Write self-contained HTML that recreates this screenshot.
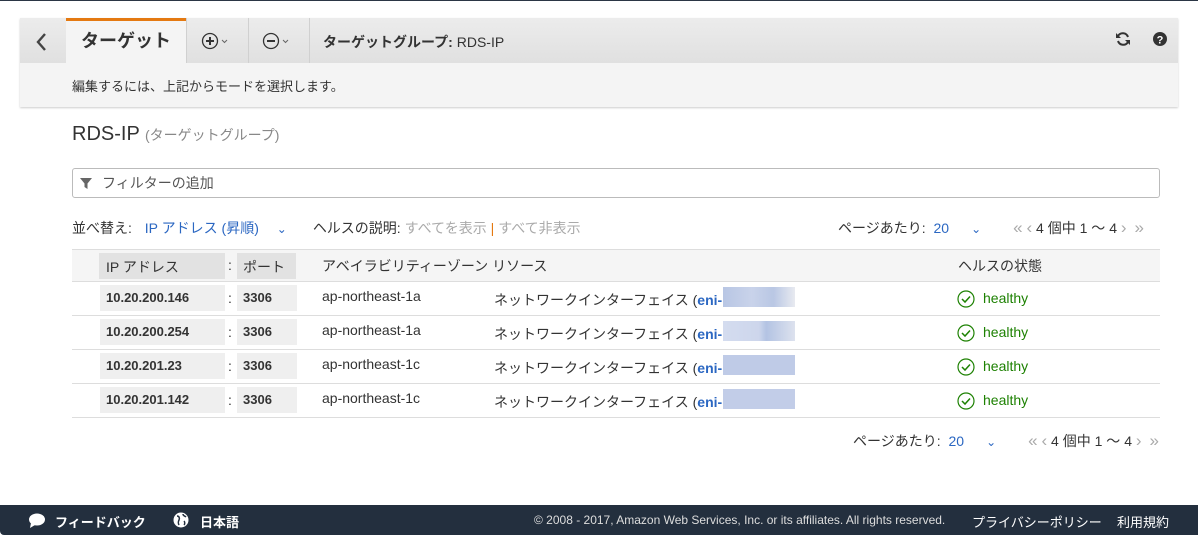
<!DOCTYPE html>
<html><head><meta charset="utf-8"><style>
*{box-sizing:border-box;margin:0;padding:0}
body{width:1198px;height:535px;overflow:hidden;background:#fff;font-family:"Liberation Sans","Noto Sans CJK JP",sans-serif;color:#333;font-size:14px;position:relative}
.abs{position:absolute}
.topline{left:0;top:0;width:1198px;height:1px;background:#2b3645}
.panel{left:20px;top:18px;width:1158px;height:89px;background:#f4f4f4;box-shadow:0 1px 2px rgba(0,0,0,.2)}
.bar{left:20px;top:18px;width:1158px;height:45px;background:linear-gradient(#ececec,#e0e0e0)}
.sep{top:18px;width:1px;height:45px;background:#d0d0d0}
.tab{left:66px;top:18px;width:120px;height:45px;background:#f4f4f4;border-top:3px solid #e47911;font-weight:bold;font-size:18px;text-align:center;line-height:40px;color:#333}
.t{white-space:nowrap}
.blue{color:#2b67c2}
.gray{color:#aaa}
.arr{font-size:17px}
.hdr{left:72px;top:249px;width:1088px;height:33px;background:#f5f5f5;border-top:1px solid #ddd;border-bottom:1px solid #ddd}
.cell{background:#efefef}
.rowline{left:72px;width:1088px;height:1px;background:#ddd}
.ok{width:18px;height:18px}
.foot{left:0;top:505px;width:1198px;height:30px;background:#232f3e;color:#fff;font-size:13px;border-bottom-left-radius:4px}
</style></head><body>
<div class="abs topline"></div>
<div class="abs panel"></div>
<div class="abs bar"></div>
<div class="abs t" style="left:35px;top:31px;">
<svg width="14" height="22" viewBox="0 0 14 22"><path d="M10 3 L3 11 L10 19" stroke="#444" stroke-width="2.4" fill="none"/></svg></div>
<div class="abs tab">ターゲット</div>
<div class="abs sep" style="left:186px"></div>
<div class="abs sep" style="left:248px"></div>
<div class="abs sep" style="left:309px"></div>
<svg class="abs" style="left:200px;top:31px" width="34" height="20" viewBox="0 0 34 20"><circle cx="10" cy="10" r="7.5" stroke="#333" stroke-width="1.3" fill="none"/><path d="M10 6v8M6 10h8" stroke="#333" stroke-width="2"/><path d="M22 9l2.5 2.5L27 9" stroke="#666" fill="none"/></svg>
<svg class="abs" style="left:261px;top:31px" width="34" height="20" viewBox="0 0 34 20"><circle cx="10" cy="10" r="7.5" stroke="#333" stroke-width="1.3" fill="none"/><path d="M6 10h8" stroke="#333" stroke-width="2"/><path d="M22 9l2.5 2.5L27 9" stroke="#666" fill="none"/></svg>
<div class="abs t" style="left:323px;top:32px;font-size:14px;font-weight:bold">ターゲットグループ: <span style="font-weight:normal">RDS-IP</span></div>
<svg class="abs" style="left:1115px;top:31px" width="16" height="16" viewBox="0 0 16 16"><path d="M13 6A5.5 5.5 0 0 0 3 5M3 10a5.5 5.5 0 0 0 10 1" stroke="#333" stroke-width="2" fill="none"/><path d="M1 2v5h5zM15 14V9h-5z" fill="#333"/></svg>
<svg class="abs" style="left:1152px;top:31px" width="16" height="16" viewBox="0 0 16 16"><circle cx="8" cy="8" r="7" fill="#333"/><text x="8" y="12.5" font-size="11" font-weight="bold" fill="#fff" text-anchor="middle" font-family="Liberation Sans">?</text></svg>
<div class="abs t" style="left:72px;top:76px;font-size:13px">編集するには、上記からモードを選択します。</div>
<div class="abs t" style="left:72px;top:123px;font-size:20px">RDS-IP <span style="font-size:14px;color:#888">(ターゲットグループ)</span></div>
<div class="abs" style="left:72px;top:168px;width:1088px;height:30px;border:1px solid #bbb;border-radius:3px"></div>
<svg class="abs" style="left:80px;top:177px" width="12" height="12" viewBox="0 0 12 12"><path d="M0 1h12L7.5 6.5V12L4.5 10V6.5z" fill="#666"/></svg>
<div class="abs t" style="left:102px;top:173px;font-size:14px;color:#555">フィルターの追加</div>
<div class="abs t" style="left:72px;top:218px;font-size:14px">並べ替え: <span class="blue" style="margin-left:9px">IP アドレス (昇順)</span> <span class="blue" style="margin-left:14px;font-size:12px">⌄</span><span style="margin-left:26px">ヘルスの説明: </span><span class="gray">すべてを表示</span> <span style="color:#e47911">|</span> <span class="gray">すべて非表示</span></div>
<div class="abs t" style="left:838px;top:218px;font-size:14px">ページあたり: <span class="blue" style="margin-left:4px">20</span><span class="blue" style="margin-left:22px;font-size:12px">⌄</span><span class="gray arr" style="margin-left:32px">«</span> <span class="gray arr">‹</span> 4 個中 1 ～ 4 <span class="gray arr">›</span> <span class="gray arr" style="margin-left:4px">»</span></div>
<div class="abs hdr"></div>
<div class="abs cell" style="left:99px;top:253px;width:126px;height:26px;background:#e2e2e2"></div>
<div class="abs cell" style="left:237px;top:253px;width:59px;height:26px;background:#e2e2e2"></div>
<div class="abs t" style="left:106px;top:257px">IP アドレス</div>
<div class="abs t" style="left:228px;top:257px">:</div>
<div class="abs t" style="left:243px;top:257px">ポート</div>
<div class="abs t" style="left:322px;top:256px">アベイラビリティーゾーン リソース</div>
<div class="abs t" style="left:958px;top:256px">ヘルスの状態</div>
<div class="abs cell" style="left:100px;top:285px;width:125px;height:26px"></div><div class="abs cell" style="left:237px;top:285px;width:60px;height:26px"></div>
<div class="abs t" style="left:106px;top:290px;font-weight:bold;font-size:13px">10.20.200.146</div><div class="abs t" style="left:228px;top:290px">:</div><div class="abs t" style="left:243px;top:290px;font-weight:bold;font-size:13px">3306</div>
<div class="abs t" style="left:322px;top:288px">ap-northeast-1a</div>
<div class="abs t" style="left:494px;top:290px">ネットワークインターフェイス (<b class="blue">eni-</b></div>
<div class="abs" style="left:723px;top:287px;width:72px;height:20px;background:linear-gradient(90deg,#b8c6e4,#c9d3ea 40%,#b9c7e4 70%,#e8eaf0)"></div>
<div class="abs rowline" style="top:315px"></div>
<div class="abs cell" style="left:100px;top:319px;width:125px;height:26px"></div><div class="abs cell" style="left:237px;top:319px;width:60px;height:26px"></div>
<div class="abs t" style="left:106px;top:324px;font-weight:bold;font-size:13px">10.20.200.254</div><div class="abs t" style="left:228px;top:324px">:</div><div class="abs t" style="left:243px;top:324px;font-weight:bold;font-size:13px">3306</div>
<div class="abs t" style="left:322px;top:322px">ap-northeast-1a</div>
<div class="abs t" style="left:494px;top:324px">ネットワークインターフェイス (<b class="blue">eni-</b></div>
<div class="abs" style="left:723px;top:321px;width:72px;height:20px;background:linear-gradient(90deg,#d4dcef,#cdd6ec 50%,#b3c3e3 60%,#dde2ee)"></div>
<div class="abs rowline" style="top:349px"></div>
<div class="abs cell" style="left:100px;top:353px;width:125px;height:26px"></div><div class="abs cell" style="left:237px;top:353px;width:60px;height:26px"></div>
<div class="abs t" style="left:106px;top:358px;font-weight:bold;font-size:13px">10.20.201.23</div><div class="abs t" style="left:228px;top:358px">:</div><div class="abs t" style="left:243px;top:358px;font-weight:bold;font-size:13px">3306</div>
<div class="abs t" style="left:322px;top:356px">ap-northeast-1c</div>
<div class="abs t" style="left:494px;top:358px">ネットワークインターフェイス (<b class="blue">eni-</b></div>
<div class="abs" style="left:723px;top:355px;width:72px;height:20px;background:#bfcbe7"></div>
<div class="abs rowline" style="top:383px"></div>
<div class="abs cell" style="left:100px;top:387px;width:125px;height:26px"></div><div class="abs cell" style="left:237px;top:387px;width:60px;height:26px"></div>
<div class="abs t" style="left:106px;top:392px;font-weight:bold;font-size:13px">10.20.201.142</div><div class="abs t" style="left:228px;top:392px">:</div><div class="abs t" style="left:243px;top:392px;font-weight:bold;font-size:13px">3306</div>
<div class="abs t" style="left:322px;top:390px">ap-northeast-1c</div>
<div class="abs t" style="left:494px;top:392px">ネットワークインターフェイス (<b class="blue">eni-</b></div>
<div class="abs" style="left:723px;top:389px;width:72px;height:20px;background:#c2cde8"></div>
<div class="abs rowline" style="top:417px"></div>
<svg class="abs ok" style="left:957px;top:290px" viewBox="0 0 18 18"><circle cx="9" cy="9" r="8" stroke="#1d8102" stroke-width="1.2" fill="none"/><path d="M5 9l3 3 5-5.5" stroke="#1d8102" stroke-width="1.5" fill="none"/></svg>
<div class="abs t" style="left:983px;top:290px;color:#1d8102">healthy</div>
<svg class="abs ok" style="left:957px;top:324px" viewBox="0 0 18 18"><circle cx="9" cy="9" r="8" stroke="#1d8102" stroke-width="1.2" fill="none"/><path d="M5 9l3 3 5-5.5" stroke="#1d8102" stroke-width="1.5" fill="none"/></svg>
<div class="abs t" style="left:983px;top:324px;color:#1d8102">healthy</div>
<svg class="abs ok" style="left:957px;top:358px" viewBox="0 0 18 18"><circle cx="9" cy="9" r="8" stroke="#1d8102" stroke-width="1.2" fill="none"/><path d="M5 9l3 3 5-5.5" stroke="#1d8102" stroke-width="1.5" fill="none"/></svg>
<div class="abs t" style="left:983px;top:358px;color:#1d8102">healthy</div>
<svg class="abs ok" style="left:957px;top:392px" viewBox="0 0 18 18"><circle cx="9" cy="9" r="8" stroke="#1d8102" stroke-width="1.2" fill="none"/><path d="M5 9l3 3 5-5.5" stroke="#1d8102" stroke-width="1.5" fill="none"/></svg>
<div class="abs t" style="left:983px;top:392px;color:#1d8102">healthy</div>
<div class="abs t" style="left:853px;top:431px;font-size:14px">ページあたり: <span class="blue" style="margin-left:4px">20</span><span class="blue" style="margin-left:22px;font-size:12px">⌄</span><span class="gray arr" style="margin-left:32px">«</span> <span class="gray arr">‹</span> 4 個中 1 ～ 4 <span class="gray arr">›</span> <span class="gray arr" style="margin-left:4px">»</span></div>
<div class="abs foot">
<svg class="abs" style="left:28px;top:8px" width="18" height="16" viewBox="0 0 18 16"><ellipse cx="9" cy="6.5" rx="8" ry="6" fill="#fff"/><path d="M3 10l-1 5 5-3z" fill="#fff"/></svg>
<div class="abs t" style="left:55px;top:7px;font-weight:bold">フィードバック</div>
<svg class="abs" style="left:173px;top:7px" width="16" height="16" viewBox="0 0 16 16"><circle cx="8" cy="8" r="7.5" fill="#fff"/><path d="M4 4c2 0 3 2 2 4s-1 3 0 5M10 2c0 2 2 2 3 3M11 9c1 1 1 3 0 4" stroke="#232f3e" stroke-width="1.5" fill="none"/></svg>
<div class="abs t" style="left:200px;top:7px;font-weight:bold">日本語</div>
<div class="abs t" style="left:534px;top:8px;font-size:12px;color:#ddd">© 2008 - 2017, Amazon Web Services, Inc. or its affiliates. All rights reserved.</div>
<div class="abs t" style="left:972px;top:7px;font-size:13px">プライバシーポリシー</div>
<div class="abs t" style="left:1117px;top:7px;font-size:13px">利用規約</div>
</div>
</body></html>
